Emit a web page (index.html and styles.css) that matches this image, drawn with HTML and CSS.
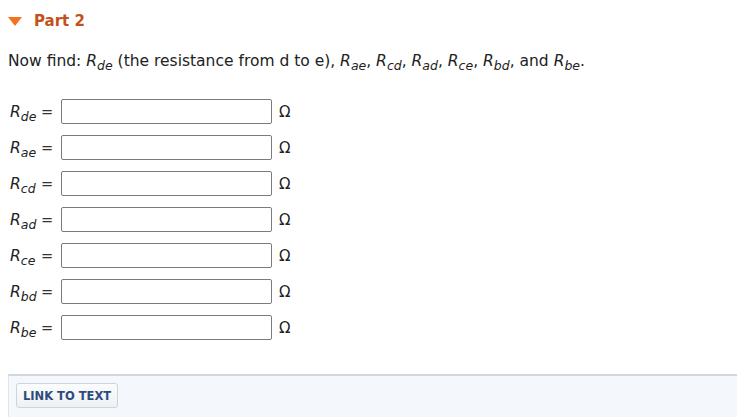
FILE: index.html
```html
<!DOCTYPE html>
<html>
<head>
<meta charset="utf-8">
<link rel="stylesheet" href="styles.css">
</head>
<body>
<div class="part">
  <span class="arrow"></span>
  <span class="part-title">Part 2</span>
</div>
<p class="prompt">Now find: <i>R<sub>de</sub></i> (the resistance from d to e), <i>R<sub>ae</sub></i>, <i>R<sub>cd</sub></i>, <i>R<sub>ad</sub></i>, <i>R<sub>ce</sub></i>, <i>R<sub>bd</sub></i>, and <i>R<sub>be</sub></i>.</p>
<div class="rows">
  <div class="row"><span class="lbl"><i>R<sub>de</sub></i></span><span class="eq">=</span><span class="box"></span><span class="unit">Ω</span></div>
  <div class="row"><span class="lbl"><i>R<sub>ae</sub></i></span><span class="eq">=</span><span class="box"></span><span class="unit">Ω</span></div>
  <div class="row"><span class="lbl"><i>R<sub>cd</sub></i></span><span class="eq">=</span><span class="box"></span><span class="unit">Ω</span></div>
  <div class="row"><span class="lbl"><i>R<sub>ad</sub></i></span><span class="eq">=</span><span class="box"></span><span class="unit">Ω</span></div>
  <div class="row"><span class="lbl"><i>R<sub>ce</sub></i></span><span class="eq">=</span><span class="box"></span><span class="unit">Ω</span></div>
  <div class="row"><span class="lbl"><i>R<sub>bd</sub></i></span><span class="eq">=</span><span class="box"></span><span class="unit">Ω</span></div>
  <div class="row"><span class="lbl"><i>R<sub>be</sub></i></span><span class="eq">=</span><span class="box"></span><span class="unit">Ω</span></div>
</div>
<div class="footer">
  <span class="btn">LINK TO TEXT</span>
</div>
</body>
</html>
```

FILE: styles.css
```css
html, body {
  margin: 0;
  padding: 0;
  background: #fff;
}
body {
  padding: 0 0 0 8px;
  font-family: "DejaVu Sans", Verdana, sans-serif;
  font-size: 15.5px;
  color: #222;
}
.part {
  display: flex;
  align-items: center;
  height: 20px;
  margin-top: 11px;
}
.arrow {
  flex-shrink: 0;
  width: 0;
  height: 0;
  border-left: 7px solid transparent;
  border-right: 7px solid transparent;
  border-top: 9px solid #f37321;
  margin-left: 0;
  margin-right: 12px;
}
.part-title {
  font-weight: bold;
  font-size: 15px;
  color: #c4501c;
}
.prompt {
  margin: 20px 0 0 0;
  line-height: 20px;
}
i {
  font-style: italic;
}
sub {
  font-size: 12.5px;
  vertical-align: -4px;
  line-height: 0;
}
.rows {
  display: flex;
  flex-direction: column;
  gap: 11px;
  margin-top: 28px;
}
.row {
  display: flex;
  align-items: center;
  height: 25px;
}
.lbl {
  flex-shrink: 0;
  width: 31px;
  padding-left: 2px;
  font-size: 15.5px;
}
.lbl sub {
  font-size: 12.5px;
}
.eq {
  flex-shrink: 0;
  width: 20px;
  color: #333;
  font-size: 14.5px;
}
.box {
  flex-shrink: 0;
  width: 209px;
  height: 23px;
  border: 1px solid #7b7b7b;
  border-radius: 2px;
  background: #fff;
}
.unit {
  margin-left: 7px;
  font-size: 15px;
}
.footer {
  margin-top: 34px;
  height: 43px;
  background: #f4f7fb;
  border-top: 2px solid #d3d6da;
  border-left: 1px solid #e2e6ea;
  display: flex;
  align-items: flex-start;
  padding-left: 7px;
  padding-top: 7px;
  box-sizing: border-box;
}
.btn {
  display: inline-flex;
  align-items: center;
  justify-content: center;
  width: 102px;
  height: 25px;
  box-sizing: border-box;
  border: 1px solid #cfd4da;
  border-radius: 3px;
  background: linear-gradient(#fbfcfd, #eef1f4);
  color: #2d4b7a;
  font-weight: bold;
  font-size: 11.5px;
}
```
